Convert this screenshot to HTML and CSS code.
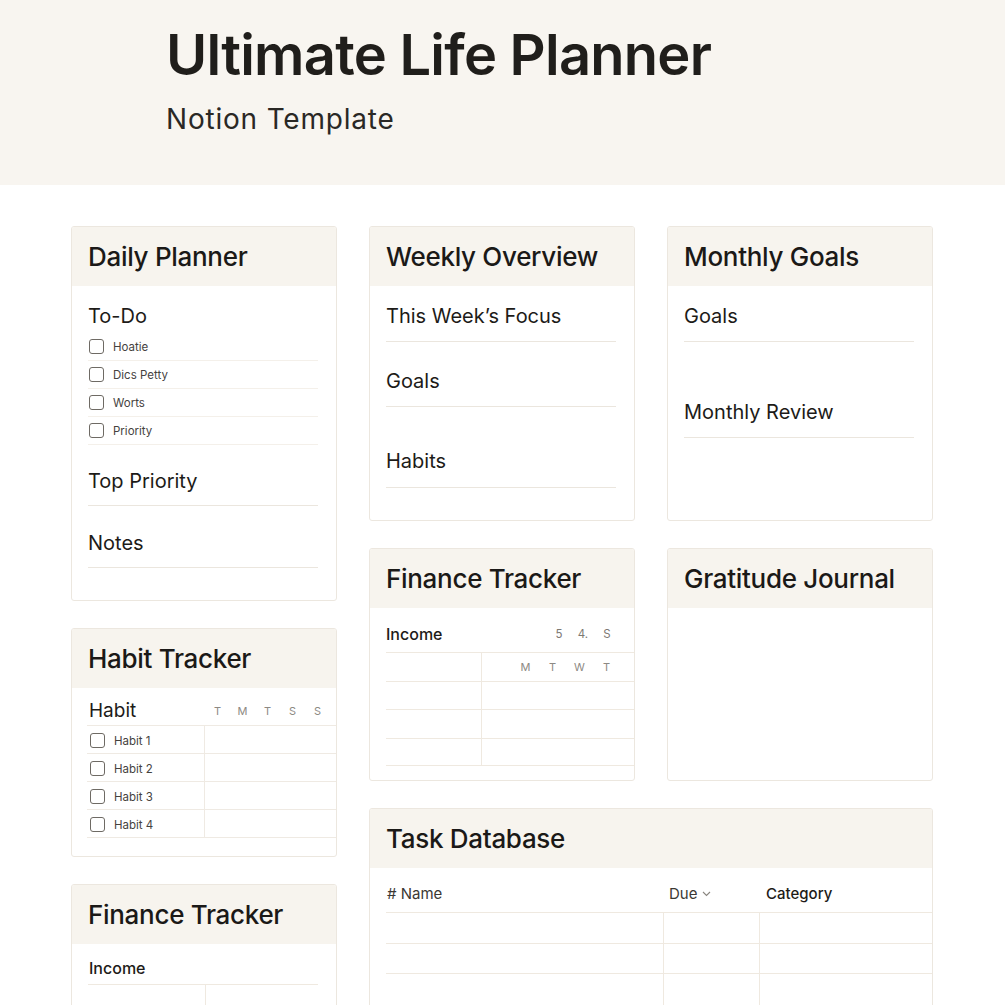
FILE: index.html
```html
<!DOCTYPE html>
<html lang="en">
<head>
<meta charset="utf-8">
<title>Ultimate Life Planner</title>
<link rel="stylesheet" href="styles.css">
</head>
<body>
<header class="hero">
  <h1 class="hero-title">Ultimate Life Planner</h1>
  <p class="hero-sub">Notion Template</p>
</header>

<main class="board">
  <div class="col">
    <section class="card">
      <div class="card-head"><h2>Daily Planner</h2></div>
      <div class="card-body daily">
        <div class="label">To-Do</div>
        <ul class="checklist">
          <li class="check-row"><span class="box"></span><span>Hoatie</span></li>
          <li class="check-row"><span class="box"></span><span>Dics Petty</span></li>
          <li class="check-row"><span class="box"></span><span>Worts</span></li>
          <li class="check-row"><span class="box"></span><span>Priority</span></li>
        </ul>
        <div class="field daily-top">Top Priority</div>
        <div class="field daily-notes">Notes</div>
      </div>
    </section>

    <section class="card">
      <div class="card-head"><h2>Habit Tracker</h2></div>
      <div class="card-body habit">
        <div class="habit-head">
          <div class="habit-label">Habit</div>
          <div class="days">
            <span>T</span><span>M</span><span>T</span><span>S</span><span>S</span>
          </div>
        </div>
        <div class="habit-row"><div class="habit-name"><span class="box"></span><span>Habit 1</span></div><div class="habit-cells"></div></div>
        <div class="habit-row"><div class="habit-name"><span class="box"></span><span>Habit 2</span></div><div class="habit-cells"></div></div>
        <div class="habit-row"><div class="habit-name"><span class="box"></span><span>Habit 3</span></div><div class="habit-cells"></div></div>
        <div class="habit-row"><div class="habit-name"><span class="box"></span><span>Habit 4</span></div><div class="habit-cells"></div></div>
      </div>
    </section>

    <section class="card">
      <div class="card-head"><h2>Finance Tracker</h2></div>
      <div class="card-body fin-small">
        <div class="income">Income</div>
        <div class="fin-small-row"><div class="fs-left"></div><div class="fs-right"></div></div>
        <div class="fin-small-row"><div class="fs-left"></div><div class="fs-right"></div></div>
      </div>
    </section>
  </div>

  <div class="grid">
    <section class="card">
      <div class="card-head"><h2>Weekly Overview</h2></div>
      <div class="card-body weekly">
        <div class="field">This Week’s Focus</div>
        <div class="field weekly-goals">Goals</div>
        <div class="field weekly-habits">Habits</div>
      </div>
    </section>

    <section class="card">
      <div class="card-head"><h2>Monthly Goals</h2></div>
      <div class="card-body monthly">
        <div class="field">Goals</div>
        <div class="field monthly-review">Monthly Review</div>
      </div>
    </section>

    <section class="card">
      <div class="card-head"><h2>Finance Tracker</h2></div>
      <div class="card-body finance">
        <div class="fin-top">
          <div class="income">Income</div>
          <div class="fin-marks"><span>5</span><span>4.</span><span>S</span></div>
        </div>
        <div class="fin-row"><div class="fin-left"></div><div class="fin-right fin-days"><span>M</span><span>T</span><span>W</span><span>T</span></div></div>
        <div class="fin-row"><div class="fin-left"></div><div class="fin-right"></div></div>
        <div class="fin-row"><div class="fin-left"></div><div class="fin-right"></div></div>
        <div class="fin-row"><div class="fin-left"></div><div class="fin-right"></div></div>
      </div>
    </section>

    <section class="card">
      <div class="card-head"><h2>Gratitude Journal</h2></div>
      <div class="card-body"></div>
    </section>

    <section class="card wide">
      <div class="card-head"><h2>Task Database</h2></div>
      <div class="card-body tasks">
        <div class="task-head">
          <div class="t-name"># Name</div>
          <div class="t-due">Due <svg class="chev" width="9" height="6" viewBox="0 0 9 6"><path d="M1 1l3.5 3.5L8 1" fill="none" stroke="#8a8680" stroke-width="1.1"/></svg></div>
          <div class="t-cat">Category</div>
        </div>
        <div class="task-row r1"><div class="t-name"></div><div class="t-due"></div><div class="t-cat"></div></div>
        <div class="task-row r2"><div class="t-name"></div><div class="t-due"></div><div class="t-cat"></div></div>
        <div class="task-row r3"><div class="t-name"></div><div class="t-due"></div><div class="t-cat"></div></div>
      </div>
    </section>
  </div>
</main>
</body>
</html>
```

FILE: styles.css
```css
* { box-sizing: border-box; margin: 0; padding: 0; }

html, body { height: 100%; overflow: hidden; }

body {
  font-family: Inter, "Noto Sans", "Liberation Sans", sans-serif;
  color: #1d1b18;
  background: #ffffff;
}

/* ---------- hero ---------- */
.hero {
  height: 185px;
  background: #f8f5f0;
  padding: 22px 0 0 166px;
}
.hero-title {
  font-size: 56px;
  line-height: 67px;
  font-weight: 600;
  letter-spacing: -0.75px;
  color: #201e1b;
}
.hero-sub {
  margin-top: 13px;
  font-size: 28px;
  line-height: 34px;
  font-weight: 400;
  letter-spacing: 0.8px;
  color: #2a2825;
}

/* ---------- layout ---------- */
.board {
  display: flex;
  align-items: flex-start;
  gap: 32px;
  padding: 41px 0 0 71px;
}
.col {
  width: 266px;
  display: flex;
  flex-direction: column;
  gap: 27px;
}
.grid {
  display: grid;
  grid-template-columns: 266px 266px;
  column-gap: 32px;
  row-gap: 27px;
}
.wide { grid-column: span 2; }

/* ---------- card ---------- */
.card {
  background: #fff;
  border: 1px solid #ece7df;
  border-radius: 3px;
  overflow: hidden;
}
.card-head {
  height: 59px;
  background: #f7f4ee;
  padding-left: 16px;
  display: flex;
  align-items: center;
}
.card-head h2 {
  font-size: 26px;
  font-weight: 500;
  letter-spacing: -0.3px;
  color: #1b1917;
  line-height: 30px;
}
.card-body { padding: 0 18px 0 16px; }

.label, .field {
  font-size: 20px;
  line-height: 24px;
  font-weight: 400;
  color: #1d1b18;
}
.field {
  padding-bottom: 13px;
  border-bottom: 1px solid #ebe6de;
}

/* ---------- daily ---------- */
.daily { padding-top: 18px; padding-bottom: 32px; }
.checklist { list-style: none; margin-top: 5px; }
.check-row {
  height: 28px;
  display: flex;
  align-items: center;
  gap: 9px;
  padding-left: 1px;
  border-bottom: 1px solid #f4f0ea;
  font-size: 11.5px;
  color: #45423e;
}
.box {
  width: 15px;
  height: 15px;
  border: 1.4px solid #6e6a64;
  border-radius: 3px;
  flex: none;
}
.daily-top { margin-top: 24px; padding-bottom: 12px; }
.daily-notes { margin-top: 25px; padding-bottom: 12px; }

/* ---------- weekly / monthly ---------- */
.weekly, .monthly { padding-top: 18px; padding-bottom: 32px; }
.weekly-goals { margin-top: 27px; }
.weekly-habits { margin-top: 42px; padding-bottom: 14px; }
.monthly-review { margin-top: 58px; }

/* ---------- habit tracker ---------- */
.habit { padding: 8px 0 18px 15px; }
.habit-head {
  height: 30px;
  display: flex;
  align-items: center;
  border-bottom: 1px solid #efeae3;
}
.habit-label {
  width: 118px;
  padding-left: 2px;
  font-size: 19px;
  color: #1d1b18;
}
.days { display: flex; }
.days span {
  width: 25px;
  text-align: center;
  font-size: 11px;
  color: #8d8983;
}
.habit-row {
  height: 28px;
  display: flex;
  align-items: stretch;
  border-bottom: 1px solid #efeae3;
}
.habit-name {
  width: 117px;
  display: flex;
  align-items: center;
  gap: 9px;
  padding: 2px 0 0 3px;
  font-size: 11.5px;
  color: #45423e;
}
.habit-cells { flex: 1; border-left: 1px solid #efeae3; }

/* ---------- finance (grid) ---------- */
.finance { padding: 16px 0 14px 16px; }
.fin-top {
  display: flex;
  align-items: center;
  justify-content: space-between;
  height: 20px;
  margin-bottom: 8px;
}
.income {
  font-size: 16px;
  line-height: 20px;
  font-weight: 500;
  color: #1d1b18;
}
.fin-marks { display: flex; padding-right: 15px; }
.fin-marks span {
  width: 24px;
  text-align: center;
  font-size: 11.5px;
  color: #7d7973;
}
.fin-row {
  height: 28.5px;
  display: flex;
  border-top: 1px solid #efe9e0;
}
.fin-row:last-child { border-bottom: 1px solid #efe9e0; }
.fin-left { width: 95px; }
.fin-right { flex: 1; border-left: 1px solid #efe9e0; }
.fin-days {
  display: flex;
  justify-content: flex-end;
  align-items: center;
  padding-right: 14px;
}
.fin-days span {
  width: 27px;
  text-align: center;
  font-size: 11px;
  color: #8d8983;
}

/* ---------- finance (small) ---------- */
.fin-small { padding: 14px 18px 0 16px; }
.fin-small .income { padding-left: 1px; margin-bottom: 6px; }
.fin-small-row {
  height: 30px;
  display: flex;
  border-top: 1px solid #efe9e0;
}
.fs-left { width: 117px; }
.fs-right { flex: 1; border-left: 1px solid #efe9e0; }

/* ---------- tasks ---------- */
.tasks { padding: 0 0 0 16px; }
.task-head, .task-row { display: flex; }
.task-head {
  height: 45px;
  align-items: center;
  padding-top: 7px;
  border-bottom: 1px solid #efe9e0;
  font-size: 15px;
}
.task-row { border-bottom: 1px solid #efe9e0; }
.task-row.r1 { height: 31px; }
.task-row.r2 { height: 30px; }
.task-row.r3 { height: 40px; }
.t-name { width: 277px; }
.t-due { width: 96px; }
.t-cat { flex: 1; }
.task-row .t-due, .task-row .t-cat { border-left: 1px solid #efe9e0; }
.task-head .t-name { color: #3b3834; padding-left: 1px; }
.task-head .t-due { color: #3b3834; padding-left: 6px; display: flex; align-items: center; gap: 5px; }
.task-head .t-cat { color: #1d1b18; font-weight: 500; padding-left: 7px; }
.chev { margin-top: 1px; }
```
